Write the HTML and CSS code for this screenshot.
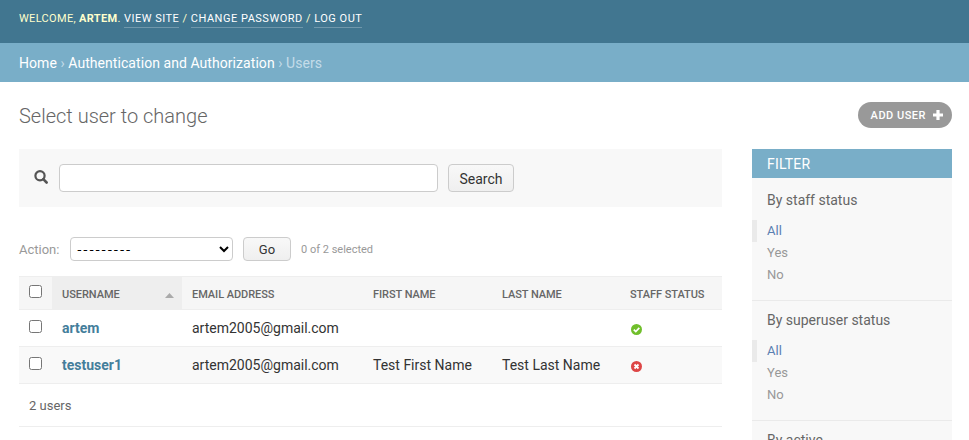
FILE: index.html
```html
<!DOCTYPE html>
<html lang="en">
<head>
<meta charset="utf-8">
<title>Select user to change</title>
<link rel="stylesheet" href="styles.css">
</head>
<body>
<header class="topbar">
  <span class="welcome">Welcome, <strong>Artem</strong>.</span>
  <a href="#">View site</a> / <a href="#">Change password</a> / <a href="#">Log out</a>
</header>
<nav class="crumbs"><a href="#">Home</a> <span class="sep">›</span> <a href="#">Authentication and Authorization</a> <span class="sep">›</span> Users</nav>
<main class="content">
  <div class="title-row">
    <h1>Select user to change</h1>
    <a class="add" href="#">Add user
      <svg width="12" height="12" viewBox="0 0 12 12"><path d="M4.4 1h3.2v3.4H11v3.2H7.6V11H4.4V7.6H1V4.4h3.4z" fill="#fff"/></svg>
    </a>
  </div>
  <div class="columns">
    <div class="list">
      <div class="search">
        <svg class="lens" width="14" height="14" viewBox="0 0 14 14"><circle cx="6" cy="5.8" r="4.6" fill="none" stroke="#555" stroke-width="2.2"/><path d="M9.3 9.2l3.3 3.3" stroke="#555" stroke-width="2.6" stroke-linecap="round"/></svg>
        <input class="search-input" type="text">
        <button class="btn btn-search" type="button">Search</button>
      </div>
      <div class="actions">
        <label class="action-label" for="act">Action:</label>
        <select class="action-select" id="act"><option>---------</option></select>
        <button class="btn btn-go" type="button">Go</button>
        <span class="counter">0 of 2 selected</span>
      </div>
      <table class="results">
        <thead>
          <tr>
            <th class="c-check"><input type="checkbox"></th>
            <th class="c-user sorted">Username<svg class="sort" width="9" height="5" viewBox="0 0 9 5"><path d="M4.5 0L9 5H0z" fill="#aaa"/></svg></th>
            <th class="c-email">Email address</th>
            <th class="c-first">First name</th>
            <th class="c-last">Last name</th>
            <th class="c-staff">Staff status</th>
          </tr>
        </thead>
        <tbody>
          <tr>
            <td class="c-check"><input type="checkbox"></td>
            <td class="c-user"><a href="#">artem</a></td>
            <td>artem2005@gmail.com</td>
            <td></td>
            <td></td>
            <td><svg class="status" width="11" height="11" viewBox="0 0 11 11"><circle cx="5.5" cy="5.5" r="5.5" fill="#70bf2b"/><path d="M2.8 5.6l2 2 3.5-3.7" fill="none" stroke="#fff" stroke-width="1.7"/></svg></td>
          </tr>
          <tr class="alt">
            <td class="c-check"><input type="checkbox"></td>
            <td class="c-user"><a href="#">testuser1</a></td>
            <td>artem2005@gmail.com</td>
            <td>Test First Name</td>
            <td>Test Last Name</td>
            <td><svg class="status" width="11" height="11" viewBox="0 0 11 11"><circle cx="5.5" cy="5.5" r="5.5" fill="#dd4646"/><path d="M3.5 3.5l4 4M7.5 3.5l-4 4" fill="none" stroke="#fff" stroke-width="1.8"/></svg></td>
          </tr>
        </tbody>
      </table>
      <p class="paginator">2 users</p>
    </div>
    <aside class="filter">
      <h2>Filter</h2>
      <section class="group first">
        <h3>By staff status</h3>
        <ul>
          <li class="selected"><a href="#">All</a></li>
          <li><a href="#">Yes</a></li>
          <li><a href="#">No</a></li>
        </ul>
      </section>
      <section class="group">
        <h3>By superuser status</h3>
        <ul>
          <li class="selected"><a href="#">All</a></li>
          <li><a href="#">Yes</a></li>
          <li><a href="#">No</a></li>
        </ul>
      </section>
      <section class="group">
        <h3>By active</h3>
      </section>
    </aside>
  </div>
</main>
</body>
</html>
```
FILE: styles.css
```css
* { box-sizing: border-box; }
html, body { margin: 0; padding: 0; overflow: hidden; height: 440px; }
body { font-family: Roboto, "Liberation Sans", sans-serif; font-size: 14px; color: #333; background: #fff; }
a { text-decoration: none; }

.topbar { height: 43px; background: #417690; color: #ffc; padding: 0 19px; font-size: 11px; line-height: 37px; text-transform: uppercase; letter-spacing: 0.5px; font-weight: 400; white-space: nowrap; }
.topbar strong { font-weight: 700; }
.topbar .welcome { letter-spacing: 0.33px; }
.topbar a { color: #fff; border-bottom: 1px solid rgba(255,255,255,0.25); padding-bottom: 2px; }

.crumbs { height: 39px; background: #79aec8; color: #c4dce8; padding: 0 19px; font-size: 14px; line-height: 41px; font-weight: 400; letter-spacing: 0.06px; white-space: nowrap; }
.crumbs a { color: #fff; }
.crumbs .sep { color: #c4dce8; }

.content { padding: 20px 17px 0 19px; }
.title-row { display: flex; justify-content: space-between; align-items: flex-start; height: 47px; }
h1 { margin: 0; font-size: 20px; line-height: 28px; font-weight: 300; color: #666; }
.add { display: flex; align-items: center; gap: 6px; height: 26px; padding: 0 8px 0 13px; border-radius: 13px; background: #999; color: #fff; font-size: 11px; font-weight: 500; text-transform: uppercase; letter-spacing: 0.5px; }

.columns { display: flex; gap: 30px; align-items: flex-start; }
.list { width: 703px; flex: none; }
.filter { width: 200px; flex: none; background: #f8f8f8; }

.search { height: 58px; background: #f8f8f8; display: flex; align-items: center; padding: 0 8px 0 15px; }
.lens { margin: -2px 11px 0 0; flex: none; }
.search-input { width: 379px; height: 28px; border: 1px solid #ccc; border-radius: 4px; background: #fff; margin-right: 10px; padding: 2px 5px; }
.btn { height: 28px; border: 1px solid #ccc; border-radius: 4px; background: linear-gradient(#f8f8f8, #efefef); color: #333; font-family: inherit; font-size: 14px; padding: 2px 0 0; }
.btn-search { width: 66px; }
.btn-go { width: 48px; height: 24px; font-size: 13px; padding-top: 1px; }

.actions { display: flex; align-items: center; height: 24px; margin-top: 30px; margin-bottom: 15px; font-size: 13px; color: #999; }
.action-label { width: 51px; color: #999; }
.action-select { width: 163px; height: 24px; margin-right: 10px; border: 1px solid #ccc; border-radius: 4px; background: #fff; color: #000; font-family: "DejaVu Sans", sans-serif; font-size: 13px; letter-spacing: 1.4px; padding: 0 2px; }
.counter { margin-left: 10px; font-size: 11px; }

.results { width: 703px; border-collapse: collapse; table-layout: fixed; }
.results th { height: 33px; background: #f6f6f6; border-top: 1px solid #eee; border-bottom: 1px solid #eee; padding: 2px 10px 0; text-align: left; font-size: 11px; font-weight: 500; text-transform: uppercase; color: #666; letter-spacing: -0.05px; white-space: nowrap; }
.results th.sorted { background: #eee; position: relative; }
.sort { position: absolute; right: 8px; top: 16px; }
.results td { height: 37px; border-bottom: 1px solid #eee; padding: 0 10px; font-size: 14px; color: #333; white-space: nowrap; }
.results .alt td { background: #f9f9f9; }
.results td a { color: #447e9b; font-weight: 700; }
.c-check { width: 33px; }
.c-user { width: 130px; }
.c-email { width: 181px; }
.c-first { width: 129px; }
.c-last { width: 128px; }
.c-staff { width: 102px; }
.results input { width: 13px; height: 13px; margin: 0 0 3px 0; display: block; }
.results th.c-check, .results td.c-check { padding: 0 0 0 10px; }
.status { display: block; margin-left: 1px; margin-top: 2px; }

.paginator { margin: 0; height: 43px; line-height: 44px; border-bottom: 1px solid #eee; padding-left: 10px; font-size: 13px; color: #666; }

.filter h2 { margin: 0; height: 29px; background: #79aec8; color: #fff; padding: 0 15px; font-size: 14px; line-height: 30px; font-weight: 400; text-transform: uppercase; letter-spacing: 0.2px; }
.group { height: 120px; padding-top: 11px; border-bottom: 1px solid #eaeaea; }
.group.first { margin-top: 3px; }
.group h3 { margin: 0 15px 11px; font-size: 14px; line-height: 17px; font-weight: 400; color: #666; }
.group ul { list-style: none; margin: 0; padding: 0; }
.group li { height: 22px; line-height: 22px; padding-left: 15px; font-size: 13px; }
.group li a { color: #999; }
.group li.selected { border-left: 5px solid #eaeaea; padding-left: 10px; }
.group li.selected a { color: #5b80b2; }
```
